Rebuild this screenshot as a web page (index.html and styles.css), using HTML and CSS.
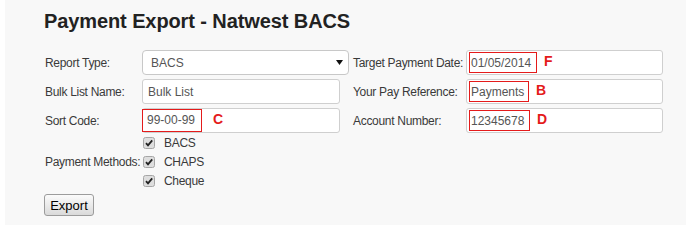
FILE: index.html
```html
<!DOCTYPE html>
<html lang="en">
<head>
<meta charset="utf-8">
<title>Payment Export - Natwest BACS</title>
<link rel="stylesheet" href="styles.css">
</head>
<body>
<div class="page">
  <h1 class="title">Payment Export - Natwest BACS</h1>

  <div class="fields">
    <span class="label">Report Type:</span>
    <div class="select">
      <span class="value">BACS</span>
      <svg class="caret" width="7" height="5" viewBox="0 0 7 5"><path d="M0 0H7L3.5 5Z" fill="#111"/></svg>
    </div>
    <span class="label">Target Payment Date:</span>
    <div class="field field-marked">
      <span class="mark mark-date">01/05/2014</span><span class="tag">F</span>
    </div>

    <span class="label">Bulk List Name:</span>
    <div class="field field-left">
      <span class="value">Bulk List</span>
    </div>
    <span class="label">Your Pay Reference:</span>
    <div class="field field-marked">
      <span class="mark mark-ref">Payments</span><span class="tag">B</span>
    </div>

    <span class="label">Sort Code:</span>
    <div class="field field-left field-sort">
      <span class="mark mark-sort">99-00-99</span><span class="tag tag-wide">C</span>
    </div>
    <span class="label">Account Number:</span>
    <div class="field field-marked">
      <span class="mark mark-acc">12345678</span><span class="tag">D</span>
    </div>
  </div>

  <div class="methods">
    <span class="label">Payment Methods:</span>
    <ul class="checks">
      <li class="check"><svg class="box" width="12" height="12" viewBox="0 0 12 12"><rect x="0.5" y="0.5" width="11" height="11" rx="2" fill="#dedede" stroke="#a6a6a6"/><path d="M3 6.2L5 8.4L9.2 3.4" fill="none" stroke="#222" stroke-width="1.8"/></svg><span>BACS</span></li>
      <li class="check"><svg class="box" width="12" height="12" viewBox="0 0 12 12"><rect x="0.5" y="0.5" width="11" height="11" rx="2" fill="#dedede" stroke="#a6a6a6"/><path d="M3 6.2L5 8.4L9.2 3.4" fill="none" stroke="#222" stroke-width="1.8"/></svg><span>CHAPS</span></li>
      <li class="check"><svg class="box" width="12" height="12" viewBox="0 0 12 12"><rect x="0.5" y="0.5" width="11" height="11" rx="2" fill="#dedede" stroke="#a6a6a6"/><path d="M3 6.2L5 8.4L9.2 3.4" fill="none" stroke="#222" stroke-width="1.8"/></svg><span>Cheque</span></li>
    </ul>
  </div>

  <button class="btn" type="button">Export</button>
</div>
</body>
</html>
```

FILE: styles.css
```css
html, body {
  margin: 0;
  padding: 0;
  background: #ffffff;
}

.page {
  margin-left: 5px;
  width: 681px;
  height: 225px;
  box-sizing: border-box;
  padding-left: 39px;
  background: #f8f8f8;
  font-family: "Liberation Sans", Arial, sans-serif;
  overflow: hidden;
}

.title {
  margin: 0;
  padding-top: 10px;
  font-size: 20px;
  line-height: 22px;
  font-weight: bold;
  color: #222;
  letter-spacing: -0.1px;
}

.fields {
  margin-top: 18px;
  display: grid;
  grid-template-columns: 98px 210px 114px 197px;
  grid-auto-rows: 25px;
  row-gap: 4px;
  align-items: center;
}

.label {
  padding-left: 1px;
  font-size: 12px;
  letter-spacing: -0.3px;
  color: #3a3a3a;
  white-space: nowrap;
}

.select {
  box-sizing: border-box;
  width: 207px;
  height: 25px;
  border: 1px solid #c8c8c8;
  border-radius: 4px;
  background: #fff;
  display: flex;
  align-items: center;
  justify-content: space-between;
  padding: 0 5px 0 8px;
  font-size: 12px;
  color: #555;
}

.caret {
  display: block;
}

.field {
  box-sizing: border-box;
  height: 25px;
  border: 1px solid #cfcfcf;
  border-radius: 3px;
  background: #fff;
  display: flex;
  align-items: center;
  font-size: 12px;
  color: #555;
}

.field-left {
  width: 198px;
  padding-left: 5px;
}

.field-marked {
  width: 197px;
  padding-left: 2px;
}

.field-sort {
  padding-left: 0;
}

.mark {
  box-sizing: border-box;
  height: 21px;
  display: flex;
  align-items: center;
  border: 1px solid #e41b1b;
  padding: 0 2px 0 1px;
}

.mark-date { width: 68px; }
.mark-ref { width: 60px; }
.mark-acc { width: 61px; }

.mark-sort {
  width: 60px;
  height: 23px;
  margin-left: -1px;
  margin-bottom: 1px;
  padding-left: 4px;
}

.tag {
  margin-left: 7px;
  margin-bottom: 3px;
  font-size: 14px;
  font-weight: bold;
  color: #e41b1b;
}

.tag-wide {
  margin-left: 11px;
}

.methods {
  display: flex;
  align-items: center;
}

.methods .label {
  width: 97px;
}

.checks {
  list-style: none;
  margin: 0;
  padding: 0 0 0 1px;
}

.check {
  height: 19px;
  display: flex;
  align-items: center;
  font-size: 12px;
  letter-spacing: -0.3px;
  color: #3a3a3a;
}

.box {
  display: block;
  margin-right: 9px;
}

.btn {
  margin-top: 4px;
  width: 50px;
  height: 22px;
  padding: 0;
  font-family: "Liberation Sans", Arial, sans-serif;
  font-size: 13px;
  color: #000;
  background: linear-gradient(#fbfbfb, #dadada);
  border: 1px solid #9c9c9c;
  border-radius: 3px;
}
```
